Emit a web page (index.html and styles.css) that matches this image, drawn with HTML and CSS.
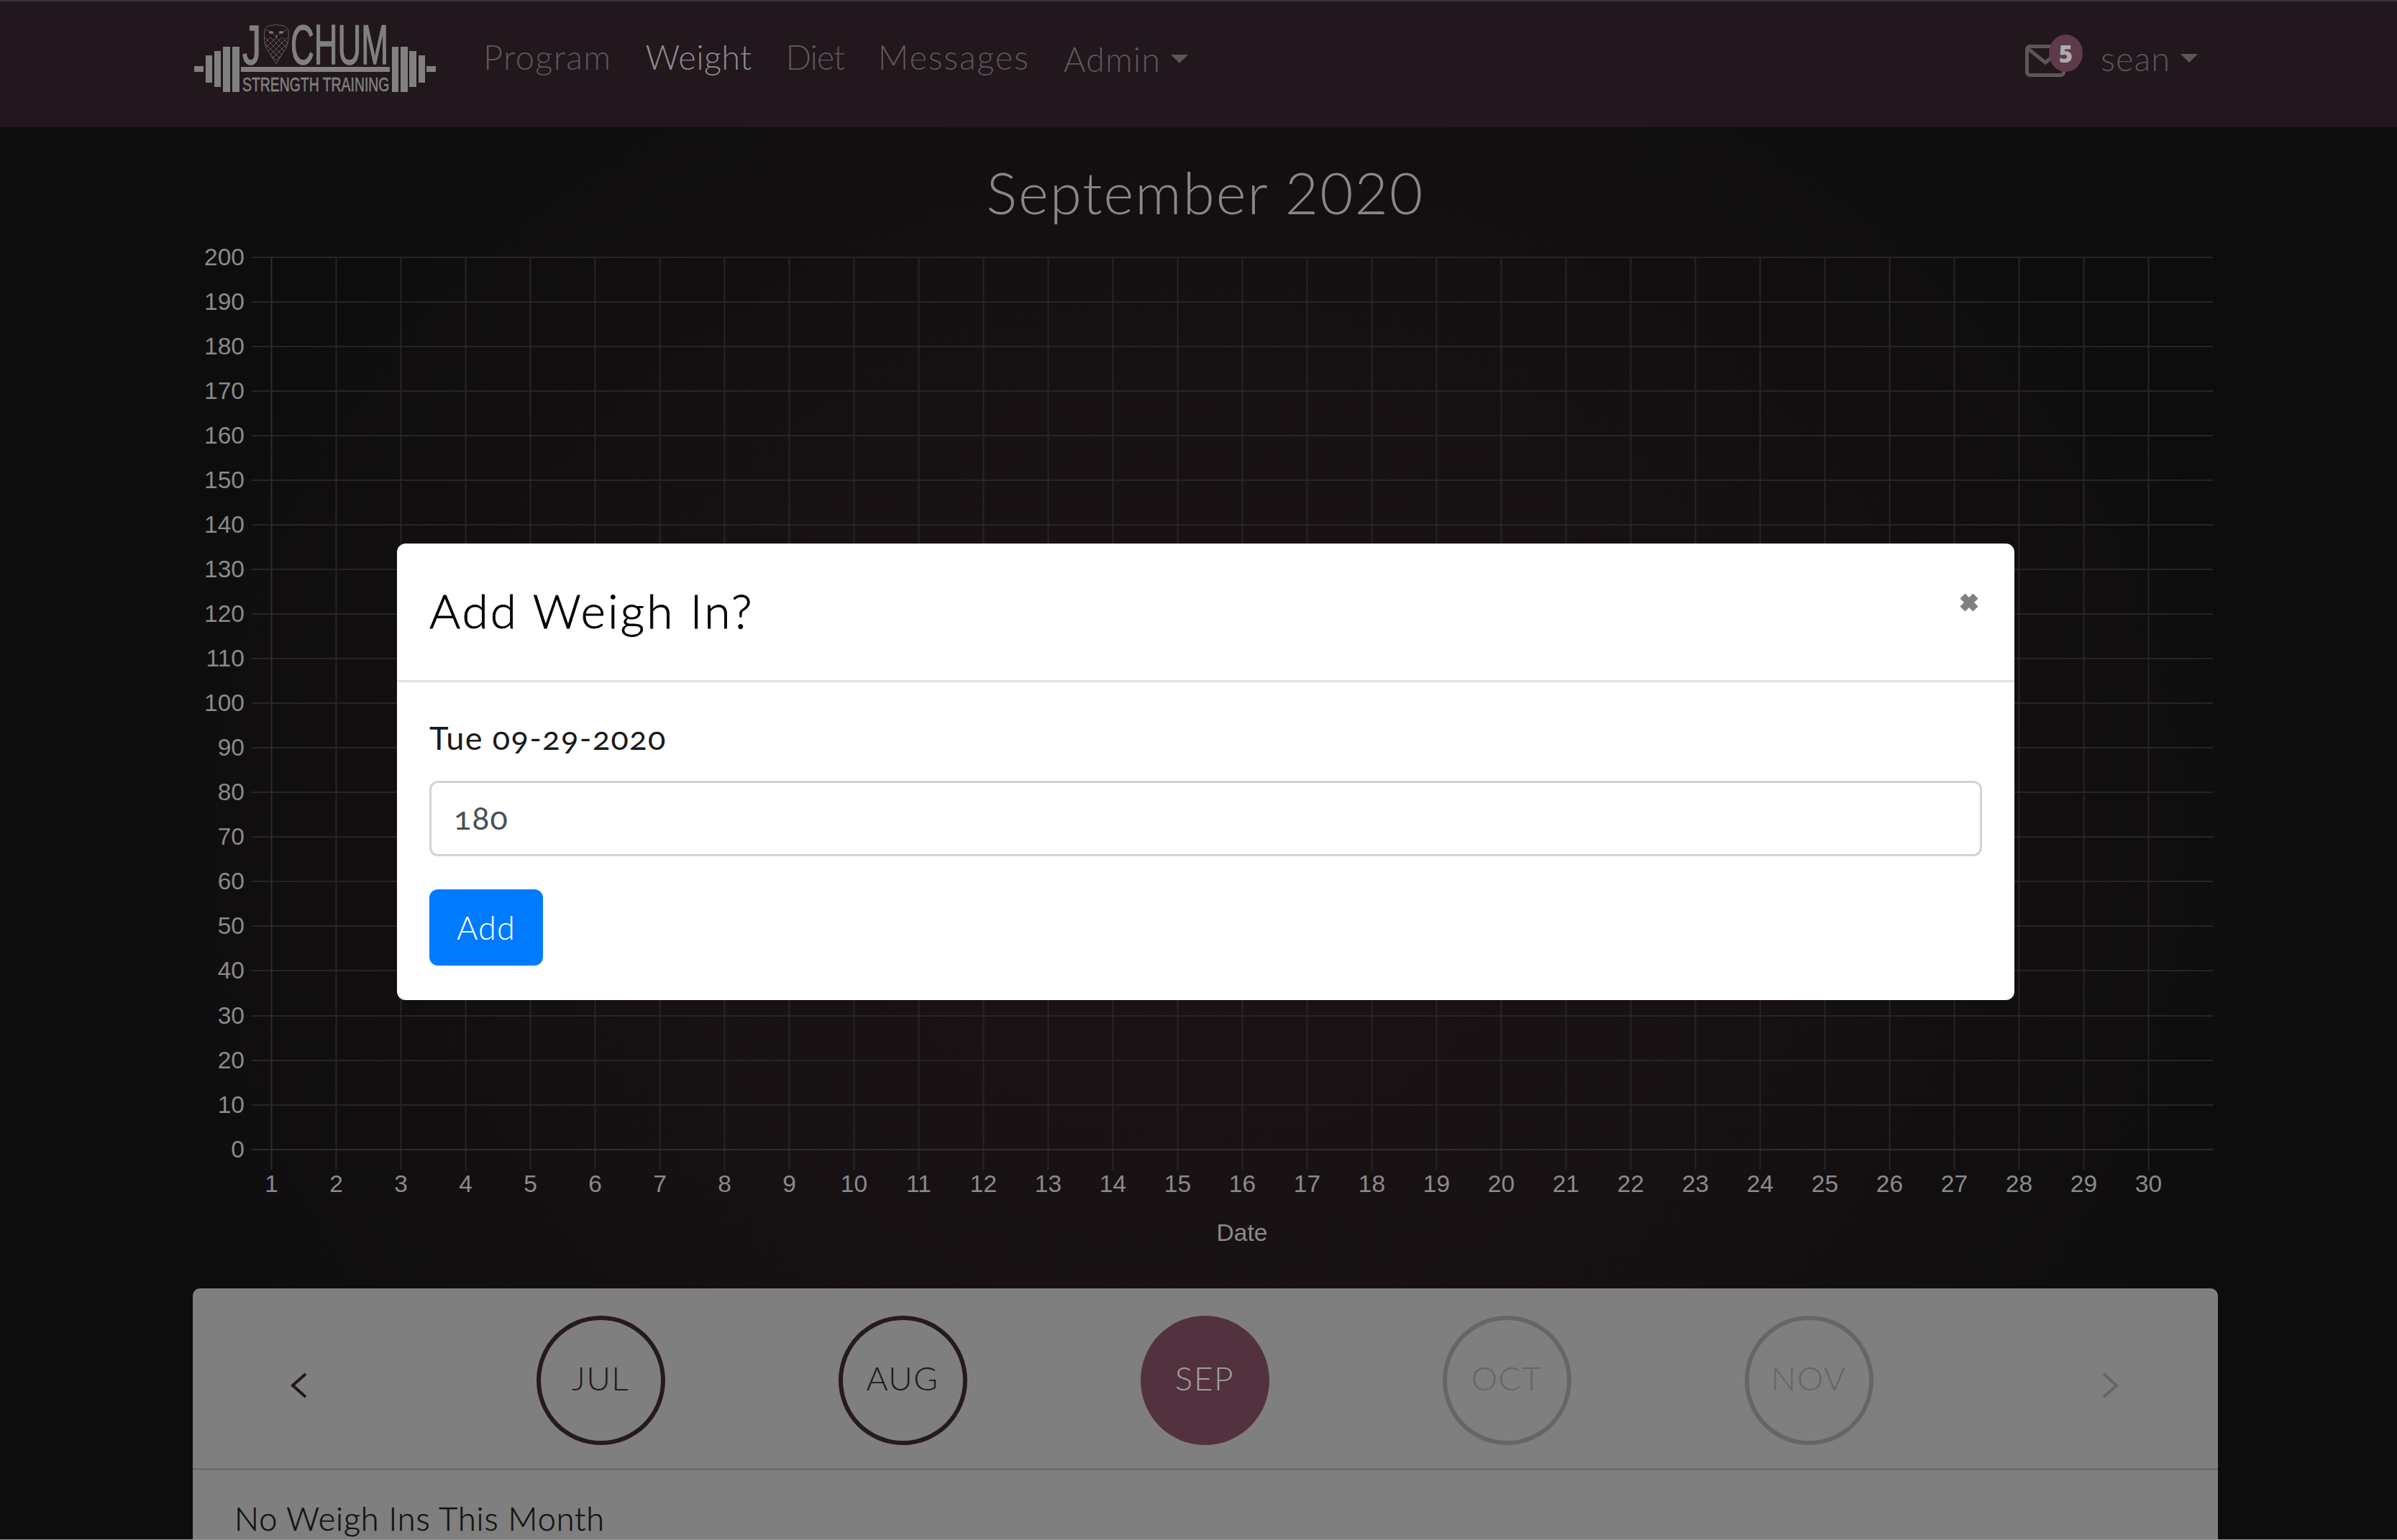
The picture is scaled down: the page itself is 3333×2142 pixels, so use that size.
FILE: index.html
```html
<!DOCTYPE html>
<html lang="en">
<head>
<meta charset="utf-8">
<title>Weight</title>
<link rel="stylesheet" href="styles.css">
</head>
<body>
<header class="navbar">
  <svg class="logo" viewBox="10 9 336 96" width="336" height="96" role="img" aria-label="Jochum Strength Training">
    <defs><clipPath id="owlBody"><path d="M108 17 L113 12 Q124 9 135 12 L141 17 Q143 40 133 50 L124 65 L115 50 Q105 40 108 17Z"/></clipPath></defs>
    <g class="logo-fill">
      <rect x="10" y="68" width="13" height="8"/><rect x="26" y="53" width="9" height="38"/><rect x="38" y="47" width="9" height="50"/><rect x="50" y="41" width="10" height="63"/><rect x="63" y="41" width="10" height="63"/>
      <rect x="285" y="41" width="9" height="63"/><rect x="297" y="41" width="10" height="63"/><rect x="309" y="47" width="10" height="50"/><rect x="322" y="53" width="9" height="38"/><rect x="333" y="68" width="13" height="8"/>
      <rect x="75" y="69" width="207" height="7"/>
      <text class="logo-big" transform="translate(77 65) scale(.675 1)">J</text>
      <text class="logo-big" transform="translate(144 65) scale(.589 1)">CHUM</text>
      <text class="logo-small" transform="translate(77 103) scale(.719 1)">STRENGTH TRAINING</text>
      <ellipse cx="117" cy="21" rx="3" ry="1.800"/><ellipse cx="131" cy="21" rx="3" ry="1.800"/><path d="M123 25h3l-1.500 4z"/>
    </g>
    <g class="logo-line">
      <path d="M108 17 L113 12 Q124 9 135 12 L141 17 Q143 40 133 50 L124 65 L115 50 Q105 40 108 17Z"/>
      <g clip-path="url(#owlBody)"><path d="M104 32 L130 58M104 40 L124 60M108 28 L140 60M116 28 L144 56M124 28 L146 50M132 28 L146 42M144 32 L118 58M144 40 L124 60M140 28 L108 60M132 28 L104 56M124 28 L102 50M116 28 L102 42M110 17 L122 24M139 17 L127 24"/></g>
    </g>
  </svg>
  <nav class="nav-links">
    <a class="nav-link link-program">Program</a>
    <a class="nav-link link-weight is-active">Weight</a>
    <a class="nav-link link-diet">Diet</a>
    <a class="nav-link link-messages">Messages</a>
    <a class="nav-link link-admin has-caret">Admin</a>
  </nav>
  <div class="nav-right">
    <div class="mail">
      <svg class="mail-icon" viewBox="0 0 56 45" width="56" height="45"><rect x="2.500" y="2.500" width="51" height="40" rx="4"/><path d="M3 5 L28 25 L53 5"/></svg>
      <span class="badge">5</span>
    </div>
    <a class="nav-link user has-caret">sean</a>
  </div>
</header>

<main class="container">
  <h1 class="month-title">September 2020</h1>
  <svg class="chart" viewBox="268 320 2816 1420" width="2816" height="1420" role="img" aria-label="Weight chart">
    <path class="grid" d="M350 358H3077M350 420H3077M350 482H3077M350 544H3077M350 606H3077M350 668H3077M350 730H3077M350 792H3077M350 854H3077M350 916H3077M350 978H3077M350 1040H3077M350 1102H3077M350 1164H3077M350 1226H3077M350 1288H3077M350 1350H3077M350 1413H3077M350 1475H3077M350 1537H3077"/>
    <path class="grid" d="M467.500 358V1627M557.500 358V1627M647.500 358V1627M737.500 358V1627M827.500 358V1627M917.500 358V1627M1007.500 358V1627M1097.500 358V1627M1187.500 358V1627M1277.500 358V1627M1367.500 358V1627M1457.500 358V1627M1547.500 358V1627M1637.500 358V1627M1727.500 358V1627M1817.500 358V1627M1907.500 358V1627M1997.500 358V1627M2087.500 358V1627M2177.500 358V1627M2267.500 358V1627M2357.500 358V1627M2447.500 358V1627M2537.500 358V1627M2627.500 358V1627M2717.500 358V1627M2807.500 358V1627M2897.500 358V1627M2987.500 358V1627"/>
    <path class="axis" d="M350 1599H3077M377.500 358V1627"/>
    <g class="y-labels">
      <text x="340" y="369">200</text><text x="340" y="431">190</text><text x="340" y="493">180</text><text x="340" y="555">170</text><text x="340" y="617">160</text><text x="340" y="679">150</text><text x="340" y="741">140</text><text x="340" y="803">130</text><text x="340" y="865">120</text><text x="340" y="927">110</text><text x="340" y="989">100</text><text x="340" y="1051">90</text><text x="340" y="1113">80</text><text x="340" y="1175">70</text><text x="340" y="1237">60</text><text x="340" y="1299">50</text><text x="340" y="1361">40</text><text x="340" y="1424">30</text><text x="340" y="1486">20</text><text x="340" y="1548">10</text><text x="340" y="1610">0</text>
    </g>
    <g class="x-labels">
      <text x="377.500" y="1658">1</text><text x="467.500" y="1658">2</text><text x="557.500" y="1658">3</text><text x="647.500" y="1658">4</text><text x="737.500" y="1658">5</text><text x="827.500" y="1658">6</text><text x="917.500" y="1658">7</text><text x="1007.500" y="1658">8</text><text x="1097.500" y="1658">9</text><text x="1187.500" y="1658">10</text><text x="1277.500" y="1658">11</text><text x="1367.500" y="1658">12</text><text x="1457.500" y="1658">13</text><text x="1547.500" y="1658">14</text><text x="1637.500" y="1658">15</text><text x="1727.500" y="1658">16</text><text x="1817.500" y="1658">17</text><text x="1907.500" y="1658">18</text><text x="1997.500" y="1658">19</text><text x="2087.500" y="1658">20</text><text x="2177.500" y="1658">21</text><text x="2267.500" y="1658">22</text><text x="2357.500" y="1658">23</text><text x="2447.500" y="1658">24</text><text x="2537.500" y="1658">25</text><text x="2627.500" y="1658">26</text><text x="2717.500" y="1658">27</text><text x="2807.500" y="1658">28</text><text x="2897.500" y="1658">29</text><text x="2987.500" y="1658">30</text>
      <text x="1727" y="1726">Date</text>
    </g>
  </svg>

  <section class="card">
    <div class="month-row">
      <svg class="arrow arrow-dark" viewBox="0 0 24 36" width="24" height="36"><path d="M22 2 L4 18 L22 34"/></svg>
      <div class="months">
        <div class="month">JUL</div>
        <div class="month">AUG</div>
        <div class="month is-current">SEP</div>
        <div class="month is-future">OCT</div>
        <div class="month is-future">NOV</div>
      </div>
      <svg class="arrow arrow-dim" viewBox="0 0 24 36" width="24" height="36"><path d="M2 2 L20 18 L2 34"/></svg>
    </div>
    <p class="card-note">No Weigh Ins This Month</p>
  </section>
</main>

<div class="modal" role="dialog">
  <div class="modal-header">
    <h2 class="modal-title">Add Weigh In?</h2>
    <svg class="close" viewBox="0 0 28 28" width="28" height="28"><path d="M5 5 L23 23M23 5 L5 23"/></svg>
  </div>
  <div class="modal-body">
    <label class="date-label" for="weigh">Tue <span class="old-nums">09-29-2020</span></label>
    <input class="weigh-input" id="weigh" type="text" value="180">
    <button class="add-btn" type="button">Add</button>
  </div>
</div>
</body>
</html>
```

FILE: styles.css
```css
* { box-sizing: border-box; }
html, body { margin: 0; padding: 0; }
body {
  width: 3333px;
  height: 2142px;
  overflow: hidden;
  position: relative;
  font-family: Lato, "Open Sans", sans-serif;
  background: radial-gradient(ellipse 1500px 1300px at 50% 55%, #1d1217 0%, #171114 50%, #0e0d0e 100%);
  border-bottom: 1px solid #9a9a9a;
}

.navbar {
  height: 177px;
  background: #21171c;
  border-top: 2px solid #3a3237;
  display: flex;
  align-items: flex-start;
  padding: 31px 277px 0 270px;
}
.logo { flex: none; margin-right: 66px; overflow: visible; }
.logo-fill { fill: #808080; }
.logo-line { fill: none; stroke: #6e6a6c; stroke-width: .8; }
.logo-big { font: 400 77px "Liberation Sans", sans-serif; stroke: #808080; stroke-width: 1.500; }
.logo-small { font: 400 27px "Liberation Sans", sans-serif; stroke: #808080; stroke-width: .6; }

.nav-links { display: flex; gap: 47px; padding-top: 16px; }
.nav-link {
  font-size: 47px;
  font-weight: 300;
  line-height: 60px;
  color: #5e5559;
}
.nav-link.is-active { color: #8e8c8d; }
.link-program { letter-spacing: 1.400px; }
.link-weight { letter-spacing: .3px; }
.link-diet { letter-spacing: -1.200px; }
.link-messages { letter-spacing: 1.700px; }
.link-admin { letter-spacing: 1px; padding-top: 3px; }
.user { letter-spacing: 1px; padding-top: 3px; }
.has-caret::after {
  content: "";
  display: inline-block;
  margin-left: 14px;
  vertical-align: 12px;
  border-top: 12px solid #5e5559;
  border-left: 12px solid transparent;
  border-right: 12px solid transparent;
}
.nav-right { margin-left: auto; display: flex; align-items: flex-start; padding-top: 15px; }
.mail { position: relative; width: 105px; padding-top: 14px; }
.mail-icon { display: block; fill: none; stroke: #5e5559; stroke-width: 5; }
.badge {
  position: absolute;
  left: 33px;
  top: 0;
  width: 47px;
  height: 52px;
  border-radius: 50%;
  background: #5f3a4a;
  color: #ababab;
  font: 800 33px/54px "Open Sans", sans-serif;
  text-align: center;
}

.container { width: 2816px; margin-left: 268px; }
.month-title {
  margin: 0;
  height: 143px;
  padding-top: 42px;
  font-size: 80px;
  font-weight: 300;
  letter-spacing: 2px;
  line-height: 96px;
  color: #888;
  text-align: center;
}
.chart { display: block; margin-bottom: 52px; }
.grid { fill: none; stroke: #272426; stroke-width: 2; }
.axis { fill: none; stroke: #2e2b2d; stroke-width: 2; }
.y-labels text, .x-labels text { font: 33.500px "Liberation Sans", sans-serif; fill: #8a8a8a; }
.y-labels text { text-anchor: end; }
.x-labels text { text-anchor: middle; }

.card {
  height: 400px;
  background: #7f7f7f;
  border-radius: 10px 10px 0 0;
}
.month-row {
  height: 253px;
  border-bottom: 3px solid #6c6c6c;
  padding: 0 137px 0 135px;
  display: flex;
  align-items: center;
  justify-content: space-between;
}
.arrow { flex: none; fill: none; stroke-width: 4; margin-top: 20px; }
.arrow-dark { stroke: #21171c; }
.arrow-dim { stroke: #666; }
.months { display: flex; gap: 241px; margin-top: 5px; }
.month {
  width: 179px;
  height: 180px;
  border: 6px solid #261a1f;
  border-radius: 50%;
  color: #21171c;
  font-size: 46px;
  font-weight: 300;
  letter-spacing: 1.500px;
  line-height: 162px;
  text-align: center;
}
.month.is-current { background: #53323f; border-color: #53323f; color: #a0a0a0; }
.month.is-future { border-color: #666; color: #666; }
.card-note {
  margin: 0;
  padding: 40px 0 0 58px;
  font-size: 45px;
  font-weight: 300;
  letter-spacing: .9px;
  -webkit-text-stroke: .5px #111;
  line-height: 54px;
  color: #111;
}

.modal {
  position: absolute;
  left: 552px;
  top: 756px;
  width: 2249px;
  height: 635px;
  background: #fff;
  border-radius: 12px;
}
.modal-header {
  height: 193px;
  border-bottom: 3px solid #dee2e6;
  padding: 48px 45px 0;
  display: flex;
  justify-content: space-between;
  align-items: flex-start;
}
.modal-title {
  margin: 0;
  font-size: 66px;
  font-weight: 300;
  letter-spacing: 3px;
  -webkit-text-stroke: .8px #000;
  line-height: 90px;
  color: #000;
}
.close { fill: none; stroke: #808080; stroke-width: 10; margin: 20px 4px 0 0; }
.modal-body { padding: 47px 45px 0; }
.date-label { display: block; font-size: 45px; font-weight: 400; letter-spacing: 1.400px; line-height: 60px; color: #1a1a1a; }
.old-nums { font-variant-numeric: oldstyle-nums; }
.weigh-input {
  display: block;
  width: 100%;
  height: 105px;
  margin-top: 30px;
  padding: 0 31px 3px;
  border: 3px solid #ced4da;
  border-radius: 12px;
  font: 400 45px Lato, sans-serif;
  font-variant-numeric: oldstyle-nums;
  letter-spacing: 1px;
  color: #495057;
  background: #fff;
}
.add-btn {
  display: block;
  width: 158px;
  height: 106px;
  margin-top: 46px;
  border: 0;
  border-radius: 12px;
  background: #007bff;
  color: #fff;
  font: 300 45px Lato, sans-serif;
  letter-spacing: 1.200px;
}
```
